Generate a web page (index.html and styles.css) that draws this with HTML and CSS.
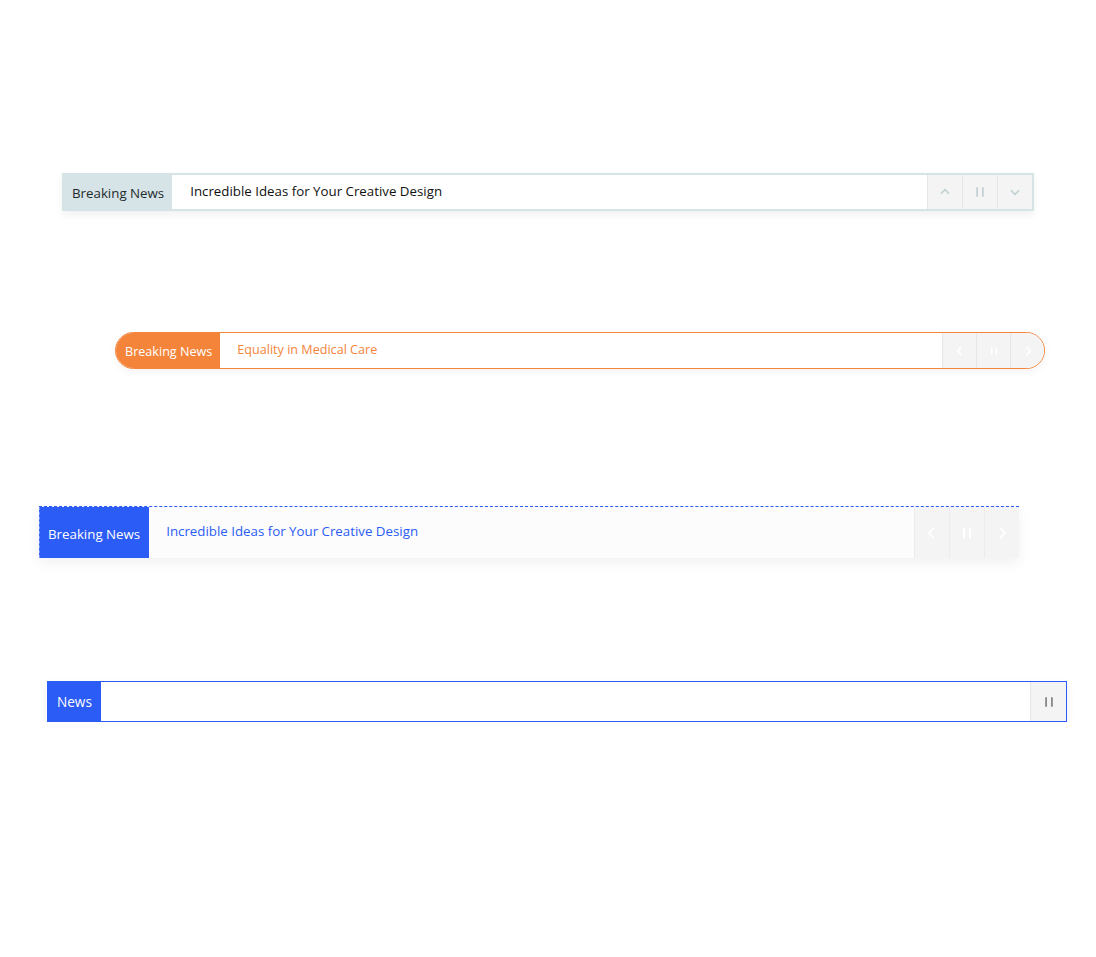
FILE: index.html
```html
<!DOCTYPE html>
<html lang="en">
<head>
    <meta charset="UTF-8">
    <meta name="viewport" content="width=device-width, initial-scale=1.0">
    <title>News Ticker Styles</title>
    <link rel="stylesheet" href="styles.css">
</head>
<body>
    <main class="demo">

        <!-- Style 1: soft teal -->
        <div class="ticker ticker-teal">
            <div class="ticker-label">Breaking News</div>
            <div class="ticker-content">Incredible Ideas for Your Creative Design</div>
            <div class="ticker-controls">
                <button class="ctrl">
                    <svg viewBox="0 0 12 12"><path d="M2.5 7.5 6 4l3.5 3.5" fill="none" stroke="currentColor" stroke-width="1.3"/></svg>
                </button>
                <button class="ctrl">
                    <svg viewBox="0 0 12 12"><path d="M3.5 2v8M8.5 2v8" stroke="currentColor" stroke-width="1.4"/></svg>
                </button>
                <button class="ctrl">
                    <svg viewBox="0 0 12 12"><path d="M2.5 4.5 6 8l3.5-3.5" fill="none" stroke="currentColor" stroke-width="1.3"/></svg>
                </button>
            </div>
        </div>

        <!-- Style 2: orange pill -->
        <div class="ticker ticker-orange">
            <div class="ticker-label">Breaking News</div>
            <div class="ticker-content">Equality in Medical Care</div>
            <div class="ticker-controls">
                <button class="ctrl">
                    <svg viewBox="0 0 12 12"><path d="M7.3 2.5 4 6l3.3 3.5" fill="none" stroke="currentColor" stroke-width="1.4"/></svg>
                </button>
                <button class="ctrl">
                    <svg viewBox="0 0 12 12"><path d="M4 3v6M8 3v6" stroke="currentColor" stroke-width="1.4"/></svg>
                </button>
                <button class="ctrl">
                    <svg viewBox="0 0 12 12"><path d="M4.7 2.5 8 6l-3.3 3.5" fill="none" stroke="currentColor" stroke-width="1.4"/></svg>
                </button>
            </div>
        </div>

        <!-- Style 3: dashed blue -->
        <div class="ticker ticker-dashed">
            <div class="ticker-label">Breaking News</div>
            <div class="ticker-content">Incredible Ideas for Your Creative Design</div>
            <div class="ticker-controls">
                <button class="ctrl">
                    <svg viewBox="0 0 12 12"><path d="M7.5 1.5 3.5 6l4 4.5" fill="none" stroke="currentColor" stroke-width="1.6"/></svg>
                </button>
                <button class="ctrl">
                    <svg viewBox="0 0 12 12"><path d="M3.5 1.5v9M8.5 1.5v9" stroke="currentColor" stroke-width="1.6"/></svg>
                </button>
                <button class="ctrl">
                    <svg viewBox="0 0 12 12"><path d="M4.5 1.5l4 4.5-4 4.5" fill="none" stroke="currentColor" stroke-width="1.6"/></svg>
                </button>
            </div>
        </div>

        <!-- Style 4: compact blue -->
        <div class="ticker ticker-blue">
            <div class="ticker-label">News</div>
            <div class="ticker-content"></div>
            <div class="ticker-controls">
                <button class="ctrl">
                    <svg viewBox="0 0 12 12"><path d="M3.5 2v8M8.5 2v8" stroke="currentColor" stroke-width="1.6"/></svg>
                </button>
            </div>
        </div>

    </main>
</body>
</html>
```

FILE: styles.css
```css
:root {
    --teal-soft: #d6e4e7;
    --orange: #f4843a;
    --blue: #2b5cf6;
    --btn-bg: #f4f4f4;
    --btn-line: #e6e6e6;
}

body {
    margin: 0;
    background-color: #ffffff;
    font-family: 'Open Sans', 'Noto Sans', sans-serif;
    font-size: 13.3px;
}

.demo {
    display: flex;
    flex-direction: column;
    align-items: flex-start;
    padding-top: 173px;
}

.ticker {
    display: flex;
    align-items: stretch;
    box-sizing: border-box;
    background-color: #ffffff;
}

.ticker-label {
    display: flex;
    align-items: center;
    padding: 0 9px;
    white-space: nowrap;
}

.ticker-content {
    flex-grow: 1;
    display: flex;
    align-items: center;
    white-space: nowrap;
    overflow: hidden;
}

.ticker-controls {
    display: flex;
}

.ctrl {
    width: 35px;
    padding: 0;
    border: none;
    border-left: 1px solid var(--btn-line);
    background-color: var(--btn-bg);
    display: flex;
    align-items: center;
    justify-content: center;
    cursor: pointer;
}

.ctrl svg {
    width: 14px;
    height: 14px;
}

/* teal */
.ticker-teal {
    margin-left: 62px;
    width: 972px;
    height: 38px;
    border: 2px solid var(--teal-soft);
    box-shadow: 0 4px 8px rgba(0, 0, 0, 0.06);
}

.ticker-teal .ticker-label {
    background-color: var(--teal-soft);
    color: #1f2a2c;
    padding: 1px 8px 0 8px;
}

.ticker-teal .ticker-content {
    padding-left: 18px;
    padding-bottom: 2px;
    color: #111;
}

.ticker-teal .ctrl {
    color: #bfcfd2;
}

/* orange */
.ticker-orange {
    margin-top: 121px;
    margin-left: 115px;
    width: 930px;
    height: 37px;
    border: 1px solid var(--orange);
    border-radius: 19px;
    overflow: hidden;
    box-shadow: 0 3px 8px rgba(0, 0, 0, 0.05);
    font-size: 12.6px;
}

.ticker-orange .ticker-label {
    background-color: var(--orange);
    color: #fff;
    padding: 1px 8px 0 9px;
}

.ticker-orange .ticker-content {
    padding-left: 17px;
    padding-bottom: 2px;
    color: var(--orange);
}

.ticker-orange .ctrl {
    width: 34px;
    color: #ffffff;
}

/* dashed */
.ticker-dashed {
    margin-top: 137px;
    margin-left: 39px;
    width: 980px;
    height: 52px;
    border-top: 1px dashed var(--blue);
    background-color: #fcfcfc;
    box-shadow: 0 5px 12px rgba(0, 0, 0, 0.06);
}

.ticker-dashed .ticker-label {
    background-color: var(--blue);
    color: #fff;
    padding: 2px 9px 0 8px;
    border-left: 1px dashed #7b98f7;
}

.ticker-dashed .ticker-content {
    padding-left: 17px;
    padding-bottom: 4px;
    color: var(--blue);
}

.ticker-dashed .ctrl {
    width: 35px;
    border-left: 1px solid #ececec;
    color: #ffffff;
}

/* compact blue */
.ticker-blue {
    margin-top: 123px;
    margin-left: 47px;
    width: 1020px;
    height: 41px;
    border: 1px solid var(--blue);
    box-shadow: 0 4px 10px rgba(0, 0, 0, 0.06);
    font-size: 13.6px;
}

.ticker-blue .ticker-label {
    background-color: var(--blue);
    color: #fff;
    padding: 0 9px;
}

.ticker-blue .ctrl {
    width: 36px;
    color: #8a8a8a;
}
```
